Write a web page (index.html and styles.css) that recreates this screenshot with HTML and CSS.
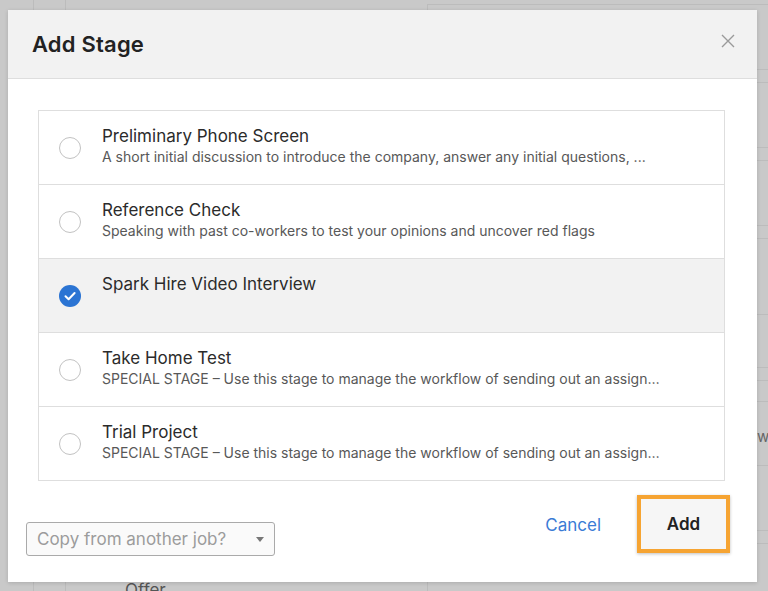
FILE: index.html
```html
<!DOCTYPE html>
<html lang="en">

<head>
    <meta charset="UTF-8">
    <meta name="viewport" content="width=device-width, initial-scale=1.0">
    <title>Add Stage</title>
    <link rel="stylesheet" href="styles.css">
</head>

<body>

    <!-- Page behind the dialog -->
    <div class="backdrop">
        <div class="rail"></div>
        <div class="rail rail-narrow"></div>
        <div class="board">
            <div class="board-stage">Offer</div>
        </div>
        <div class="side">
            <div class="side-row r-lg"></div>
            <div class="side-row r-sm"></div>
            <div class="side-row r-lg"></div>
            <div class="side-row r-sm"></div>
            <div class="side-row r-lg"></div>
            <div class="side-row r-sm"></div>
            <div class="side-row r-xl"></div>
            <div class="side-row r-md"></div>
            <div class="side-row r-sm"></div>
            <div class="side-row r-xs"></div>
            <div class="side-row r-lg side-text">w</div>
            <div class="side-row r-lg"></div>
            <div class="side-row r-sm"></div>
        </div>
    </div>

    <!-- Add Stage dialog -->
    <div class="modal">
        <div class="modal-header">
            <h1>Add Stage</h1>
            <svg class="close" width="14" height="14" viewBox="0 0 14 14">
                <path d="M1 1 L13 13 M13 1 L1 13" stroke="#9a9a9a" stroke-width="1.4" fill="none" />
            </svg>
        </div>

        <div class="modal-body">
            <div class="stage-list">

                <div class="stage">
                    <span class="radio"></span>
                    <div class="stage-text">
                        <div class="stage-name">Preliminary Phone Screen</div>
                        <div class="stage-desc">A short initial discussion to introduce the company, answer any initial questions, ...</div>
                    </div>
                </div>

                <div class="stage">
                    <span class="radio"></span>
                    <div class="stage-text">
                        <div class="stage-name">Reference Check</div>
                        <div class="stage-desc">Speaking with past co-workers to test your opinions and uncover red flags</div>
                    </div>
                </div>

                <div class="stage selected">
                    <span class="radio checked">
                        <svg width="22" height="22" viewBox="0 0 22 22">
                            <path d="M6.5 11.2 L9.6 14.2 L15.6 8" stroke="white" stroke-width="2" fill="none" stroke-linecap="round" stroke-linejoin="round" />
                        </svg>
                    </span>
                    <div class="stage-text">
                        <div class="stage-name">Spark Hire Video Interview</div>
                        <div class="stage-desc"></div>
                    </div>
                </div>

                <div class="stage">
                    <span class="radio"></span>
                    <div class="stage-text">
                        <div class="stage-name">Take Home Test</div>
                        <div class="stage-desc">SPECIAL STAGE – Use this stage to manage the workflow of sending out an assignment to candidates</div>
                    </div>
                </div>

                <div class="stage">
                    <span class="radio"></span>
                    <div class="stage-text">
                        <div class="stage-name">Trial Project</div>
                        <div class="stage-desc">SPECIAL STAGE – Use this stage to manage the workflow of sending out an assignment to candidates</div>
                    </div>
                </div>

            </div>
        </div>

        <div class="modal-footer">
            <div class="copy-select">
                <span>Copy from another job?</span>
                <span class="caret"></span>
            </div>
            <div class="actions">
                <a class="cancel" href="#">Cancel</a>
                <div class="highlight">
                    <button class="add">Add</button>
                </div>
            </div>
        </div>
    </div>

</body>

</html>
```

FILE: styles.css
```css
body {
    margin: 0;
    padding: 0;
    background-color: #c9c9c9;
    font-family: Inter, "Noto Sans", sans-serif;
    color: #2b2b2b;
    overflow: hidden;
}

/* Backdrop page */
.backdrop {
    display: flex;
    height: 591px;
    overflow: hidden;
}

.rail {
    width: 33px;
    border-right: 1px solid #bcbcbc;
}

.rail-narrow {
    width: 31px;
}

.board {
    flex: 1;
    display: flex;
    flex-direction: column;
    justify-content: flex-end;
    padding-left: 59px;
}

.board-stage {
    font-size: 17px;
    color: #555;
    margin-bottom: -9px;
}

.side {
    width: 340px;
    flex-shrink: 0;
    margin-top: 4px;
    border-top: 1px solid #bcbcbc;
    border-left: 1px solid #bcbcbc;
    display: flex;
    flex-direction: column;
}

.side-row {
    flex-shrink: 0;
    border-bottom: 1px solid #bcbcbc;
}

.r-lg {
    height: 64px;
}

.r-sm {
    height: 12px;
}

.r-xl {
    height: 75px;
}

.r-md {
    height: 52px;
}

.r-xs {
    height: 20px;
}

.side-text {
    box-sizing: border-box;
    padding-left: 329px;
    padding-top: 25px;
    font-size: 15px;
    color: #666;
}

/* Dialog */
.modal {
    position: absolute;
    top: 10px;
    left: 8px;
    width: 749px;
    height: 572px;
    background-color: white;
    box-shadow: 0 1px 4px rgba(0, 0, 0, 0.15);
    display: flex;
    flex-direction: column;
}

.modal-header {
    height: 68px;
    background-color: #f2f2f2;
    border-bottom: 1px solid #dedede;
    display: flex;
    align-items: center;
    justify-content: space-between;
    padding: 0 22px 0 24px;
}

.modal-header h1 {
    margin: 0;
    font-size: 22px;
    font-weight: 600;
    color: #222;
    letter-spacing: 0.2px;
}

.close {
    margin-top: -6px;
}

.modal-body {
    padding: 31px 32px 0 30px;
}

.stage-list {
    border: 1px solid #dedede;
    height: 371px;
    box-sizing: border-box;
    overflow: hidden;
}

.stage {
    display: flex;
    align-items: center;
    height: 74px;
    box-sizing: border-box;
    border-bottom: 1px solid #dedede;
    padding-left: 20px;
}

.stage.selected {
    background-color: #f2f2f2;
}

.radio {
    width: 22px;
    height: 22px;
    box-sizing: border-box;
    border: 1.5px solid #c2c2c2;
    border-radius: 50%;
    background-color: white;
    flex-shrink: 0;
}

.radio.checked {
    border: none;
    background-color: #2b74d3;
}

.radio svg {
    display: block;
}

.stage-text {
    margin-left: 21px;
    min-width: 0;
    flex: 1;
    padding-right: 63px;
    padding-bottom: 4px;
}

.stage-name {
    font-size: 17px;
    line-height: 22px;
    color: #2b2b2b;
}

.stage-desc {
    font-size: 14px;
    line-height: 20px;
    height: 20px;
    color: #585858;
    white-space: nowrap;
    overflow: hidden;
    text-overflow: ellipsis;
}

.modal-footer {
    display: flex;
    justify-content: space-between;
    align-items: flex-start;
    padding: 14px 27px 0 18px;
}

.copy-select {
    margin-top: 27px;
    width: 249px;
    height: 34px;
    box-sizing: border-box;
    border: 1px solid #aaa;
    border-radius: 3px;
    background-color: #fafafa;
    display: flex;
    align-items: center;
    justify-content: space-between;
    padding: 0 10px 0 10px;
    font-size: 17px;
    color: #9c9c9c;
}

.caret {
    width: 0;
    height: 0;
    border-left: 4px solid transparent;
    border-right: 4px solid transparent;
    border-top: 5px solid #777;
}

.actions {
    display: flex;
    align-items: center;
}

.cancel {
    color: #3a7bd5;
    text-decoration: none;
    font-size: 17px;
    margin-right: 36px;
    margin-top: 2px;
}

.highlight {
    border: 4px solid #f6a432;
    box-shadow: 0 1px 3px rgba(0, 0, 0, 0.25);
}

.add {
    display: block;
    width: 85px;
    height: 50px;
    border: none;
    background-color: #f6f6f6;
    font-family: Inter, "Noto Sans", sans-serif;
    font-size: 17px;
    font-weight: 600;
    color: #222;
}
```
